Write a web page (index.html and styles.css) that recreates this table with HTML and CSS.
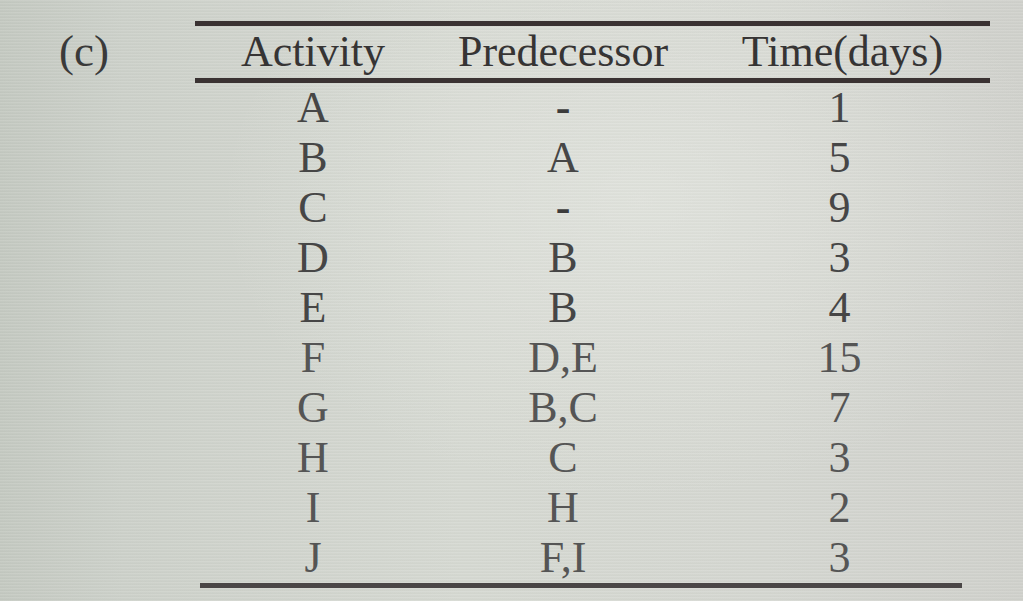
FILE: index.html
```html
<!DOCTYPE html>
<html>
<head>
<meta charset="utf-8">
<link rel="stylesheet" href="styles.css">
</head>
<body>
<main class="page">
  <div class="label">(c)</div>
  <div class="sheet">
    <table class="act">
      <thead>
        <tr><th>Activity</th><th>Predecessor</th><th>Time(days)</th></tr>
      </thead>
      <tbody>
        <tr><td>A</td><td><span class="dash">-</span></td><td>1</td></tr>
        <tr><td>B</td><td>A</td><td>5</td></tr>
        <tr><td>C</td><td><span class="dash">-</span></td><td>9</td></tr>
        <tr><td>D</td><td>B</td><td>3</td></tr>
        <tr><td>E</td><td>B</td><td>4</td></tr>
        <tr><td>F</td><td>D,E</td><td>15</td></tr>
        <tr><td>G</td><td>B,C</td><td>7</td></tr>
        <tr><td>H</td><td>C</td><td>3</td></tr>
        <tr><td>I</td><td>H</td><td>2</td></tr>
        <tr><td>J</td><td>F,I</td><td>3</td></tr>
      </tbody>
    </table>
    <div class="bottom-rule"></div>
  </div>
</main>
</body>
</html>
```
FILE: styles.css
```css
html, body {
  margin: 0;
  padding: 0;
  width: 1023px;
  height: 601px;
  overflow: hidden;
}
body {
  background:
    repeating-linear-gradient(180deg, rgba(255,255,255,0.10) 0px, rgba(255,255,255,0.10) 1px, rgba(120,130,120,0.06) 2px, rgba(255,255,255,0) 3px),
    radial-gradient(ellipse 420px 300px at 640px 200px, rgba(232,234,228,0.55), rgba(232,234,228,0) 100%),
    linear-gradient(90deg, #c3c8c0 0%, #ccd0c9 12%, #d5d8d1 45%, #d4d6d0 75%, #cfd0cb 100%);
  font-family: "Liberation Serif", "Times New Roman", serif;
  color: #464646;
}
.page {
  display: flex;
  padding: 21px 0 0 59px;
}
.label {
  width: 136px;
  flex: none;
  font-size: 45px;
  line-height: 52px;
  padding-top: 4px;
  color: #3a3a3a;
}
.sheet {
  display: flex;
  flex-direction: column;
}
.act {
  width: 795px;
  border-collapse: collapse;
  table-layout: fixed;
  font-size: 44px;
}
.act th, .act td { box-sizing: border-box; }
.act th:nth-child(1), .act td:nth-child(1) { width: 236px; }
.act th:nth-child(2), .act td:nth-child(2) { width: 264px; }
.act th:nth-child(3), .act td:nth-child(3) { width: 295px; }
.act thead tr {
  border-top: 5px solid #3a3232;
  border-bottom: 5px solid #3a3232;
}
.act th {
  font-weight: normal;
  text-align: center;
  padding: 0;
  line-height: 52px;
  color: #363434;
}
.act td {
  text-align: center;
  padding: 0;
  line-height: 50px;
  height: 50px;
}
.act td:nth-child(3) { padding-right: 6px; }
.act tbody tr:nth-child(n+6) td { color: #555; }
.dash {
  display: inline-block;
  font-weight: bold;
  color: #3c3c3c;
}
.bottom-rule {
  margin-left: 5px;
  width: 762px;
  height: 5px;
  background: #4a4646;
}
```
